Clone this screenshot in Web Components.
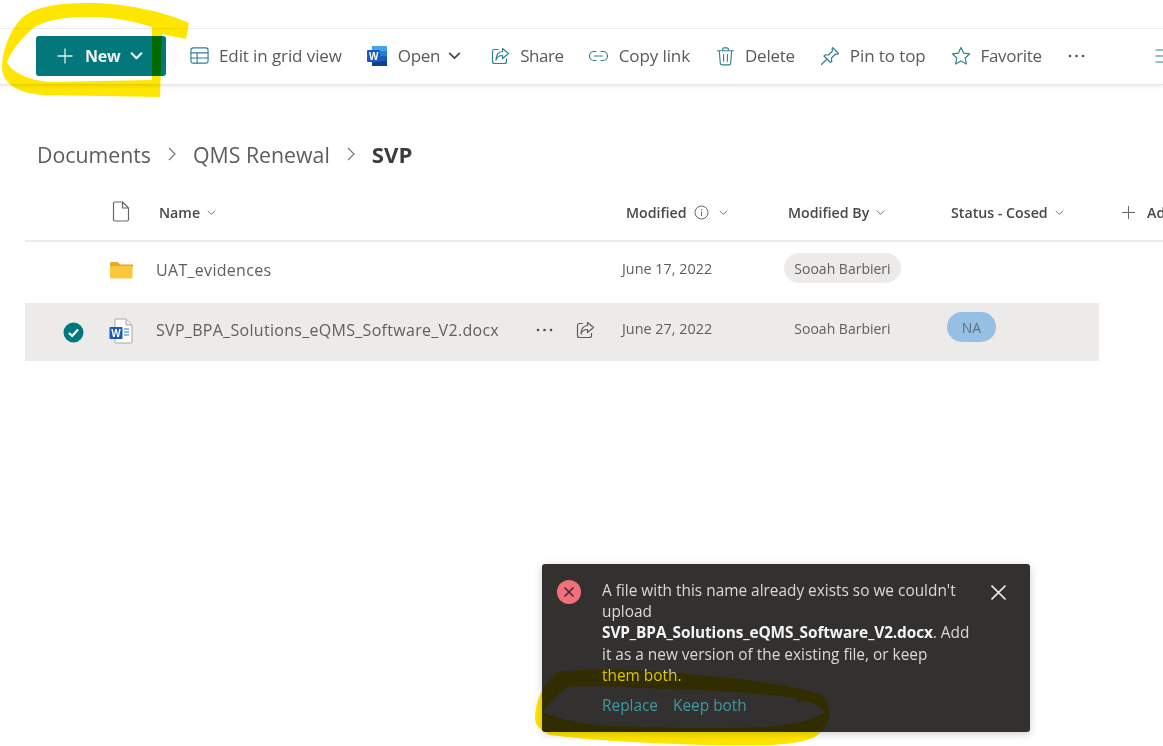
<!DOCTYPE html>
<html lang="en"><head><meta charset="utf-8"><title>SVP</title>
<style>
html,body{margin:0;height:100%;overflow:hidden;background:#fff}
body{font-family:"Open Sans","Liberation Sans",sans-serif;color:#605e5c;position:relative;width:1163px;height:746px;filter:blur(.45px)}
svg{display:block}
</style></head><body>
<sp-toolbar>
  <sp-new>New</sp-new>
  <sp-tool icon="grid">Edit in grid view</sp-tool>
  <sp-tool icon="word" caret style="letter-spacing:-.3px">Open</sp-tool>
  <sp-tool icon="share" style="margin-left:5px;letter-spacing:-.45px">Share</sp-tool>
  <sp-tool icon="link">Copy link</sp-tool>
  <sp-tool icon="trash" style="margin-left:2px;letter-spacing:-.25px">Delete</sp-tool>
  <sp-tool icon="pin" style="margin-left:1px">Pin to top</sp-tool>
  <sp-tool icon="star" style="margin-left:1px;letter-spacing:-.35px">Favorite</sp-tool>
  <sp-tool icon="more" style="margin-left:2px"></sp-tool>
  <sp-tool icon="list" style="margin-left:46px"></sp-tool>
</sp-toolbar>
<sp-crumbs><span>Documents</span><sp-sep></sp-sep><span>QMS Renewal</span><sp-sep></sp-sep><b>SVP</b></sp-crumbs>
<sp-list>
  <sp-head></sp-head>
  <sp-row kind="folder" name="UAT_evidences" date="June 17, 2022"><sp-pill>Sooah Barbieri</sp-pill></sp-row>
  <sp-row kind="doc" selected name="SVP_BPA_Solutions_eQMS_Software_V2.docx" date="June 27, 2022" status="NA"><sp-pill flat>Sooah Barbieri</sp-pill></sp-row>
</sp-list>
<sp-toast>A file with this name already exists so we couldn't upload <b>SVP_BPA_Solutions_eQMS_Software_V2.docx</b>. Add<br>it as a new version of the existing file, or keep<br>them both.</sp-toast>
<sp-marker></sp-marker>
<script>
const T='#2f8290';
const stroke=(inner,w=20,h=20,vb='0 0 20 20')=>`<svg width="${w}" height="${h}" viewBox="${vb}" fill="none" stroke="${T}" stroke-width="1.2" stroke-linecap="round" stroke-linejoin="round">${inner}</svg>`;
const ICONS={
 grid:stroke('<rect x="1" y="2" width="18" height="16" rx="2.200"/><path d="M1 7.300h18M1 12.600h18M7.500 7.300V18"/>',19,19),
 word:`<svg width="22" height="22" viewBox="0 0 22 22"><rect x="6" y="1" width="15" height="20" rx="1" fill="#2b7cd3"/><rect x="6" y="11" width="15" height="5" fill="#185abd"/><rect x="6" y="16" width="15" height="5" fill="#103f91"/><rect x="6" y="1" width="15" height="5" fill="#41a5ee"/><rect x="1" y="5" width="13" height="12" rx="1" fill="#185abd"/><text x="7.5" y="14.6" font-family="Liberation Sans" font-weight="700" font-size="10" fill="#fff" text-anchor="middle">W</text></svg>`,
 share:stroke('<path d="M8 3.500H4.500A2 2 0 0 0 2.500 5.500v10a2 2 0 0 0 2 2h10a2 2 0 0 0 2-2V13"/><path d="M12.500 2.500l6 5-6 5V9.500C9 9.500 7 11 6 14c0-5 2.500-8.500 6.500-8.500z"/>'),
 link:stroke('<path d="M8 5.500H6a4.500 4.500 0 0 0 0 9h2M13 5.500h2a4.500 4.500 0 0 1 0 9h-2M6.500 10h8"/>',21,20,'0 0 21 20'),
 trash:stroke('<path d="M1.500 4.500h17M7 4.500V3a1.500 1.500 0 0 1 1.500-1.500h3A1.500 1.500 0 0 1 13 3v1.500M3.500 4.500l1 13a2 2 0 0 0 2 1.800h7a2 2 0 0 0 2-1.800l1-13M8 8.500v7M12 8.500v7"/>',19,20),
 pin:stroke('<path d="M12.500 1.500l6 6-1 .9-2-.4-4 4 .2 3.300-1.200 1.200-6.500-6.500 1.200-1.200 3.300.2 4-4-.4-2zM6.500 13.500L1.500 18.500"/>'),
 star:stroke('<path d="M10 1.500l2.600 5.600 6.100.7-4.500 4.200 1.200 6L10 15l-5.400 3 1.200-6L1.300 7.800l6.100-.7z"/>'),
 more:`<svg width="17" height="20" viewBox="0 0 17 20" fill="#3d5a66"><circle cx="2" cy="10" r="1.300"/><circle cx="8.500" cy="10" r="1.300"/><circle cx="15" cy="10" r="1.300"/></svg>`,
 list:stroke('<path d="M1 4h18M1 10h18M1 16h18"/>'),
};
const chev=(s=12,c='#4a4846',w=1.6)=>`<svg width="${s}" height="${s}" viewBox="0 0 12 12" fill="none" stroke="${c}" stroke-width="${w}" stroke-linecap="round" stroke-linejoin="round"><path d="M1.500 4l4.500 4.500L10.500 4"/></svg>`;
class Base extends HTMLElement{
  html(){return ''}
  connectedCallback(){ if(!this.shadowRoot){this.attachShadow({mode:'open'}).innerHTML=this.html()} }
}
const def=(n,html)=>customElements.define(n,class extends Base{html(){return html(this)}});
def('sp-toolbar',()=>`<style>:host{display:flex;align-items:center;gap:24px;height:57px;margin-top:28px;padding:0 0 2px 36px;box-sizing:border-box;border-top:1px solid #ececec;border-bottom:1px solid #e6e6e6;box-shadow:0 2px 3px rgba(0,0,0,.07);overflow:hidden;background:#fff;font-size:17px}</style><slot></slot>`);
def('sp-new',()=>`<style>:host{display:flex;flex:none;align-items:center;box-sizing:border-box;width:130px;height:40px;padding-left:21px;background:#03787c;color:#f3f3f3;border-radius:3px;font-weight:700;font-size:16px;letter-spacing:-.2px}
svg{display:block}.p{margin-right:12px}.c{margin-left:9px}</style><svg class="p" width="16" height="16" viewBox="0 0 16 16" stroke="#e4eeee" stroke-width="1.300" fill="none"><path d="M8 .5v15M.5 8h15"/></svg><slot></slot><span class="c">${chev(13,'#f3f3f3',2)}</span>`);
def('sp-tool',h=>`<style>:host{display:flex;flex:none;align-items:center;gap:10px;color:#5c5a58;font-size:17px;letter-spacing:-.1px}svg{display:block}.k{margin-left:-2px}</style>${ICONS[h.getAttribute('icon')]}${h.textContent.trim()?'<slot></slot>':''}${h.hasAttribute('caret')?`<span class="k">${chev(13)}</span>`:''}`);
def('sp-crumbs',()=>`<style>:host{display:flex;align-items:center;gap:17px;height:42px;margin-top:48px;padding-left:37px;font-size:21.300px;color:#5f5d5b}
::slotted(b){color:#3e3c3a;font-weight:700;font-size:22.200px}</style><slot></slot>`);
def('sp-sep',()=>`<style>:host{display:block;flex:none}svg{display:block}</style><svg width="8" height="14" viewBox="0 0 8 14" fill="none" stroke="#7a7876" stroke-width="1.200"><path d="M1 1l6 6-6 6"/></svg>`);
def('sp-list',()=>`<style>:host{display:block;margin-top:10px;margin-left:25px}</style><slot></slot>`);
const COLS='grid-template-columns:84px 47px 465px 163px 163px 152px';
def('sp-head',()=>`<style>:host{display:grid;${COLS} 1fr;align-items:center;height:55px;margin-bottom:1px;border-bottom:2px solid #edebe9;font-size:14.200px;font-weight:600;color:#4b4947;white-space:nowrap;overflow:hidden}
.c{display:flex;align-items:center;gap:7px}svg{display:block;flex:none}</style>
<span></span>
<span class="c" style="margin:-2px 0 0 3px"><svg width="18" height="21" viewBox="0 0 18 21" fill="none" stroke="#6a6866" stroke-width="1.200" stroke-linejoin="round"><path d="M3 1h7.500L16.500 7v11.500a1.500 1.500 0 0 1-1.500 1.500H3a1.500 1.500 0 0 1-1.500-1.500v-16A1.500 1.500 0 0 1 3 1zM10.500 1v6h6"/></svg></span>
<span class="c" style="padding-left:3px">Name ${chev(9,'#6a6866',1.200)}</span>
<span class="c" style="padding-left:5px">Modified <svg width="15" height="15" viewBox="0 0 15 15" fill="none" stroke="#6a6866"><circle cx="7.500" cy="7.500" r="6.500"/><path d="M7.500 6.500v4.500M7.500 4v1.200"/></svg><span style="margin-left:3px;display:flex">${chev(9,'#6a6866',1.200)}</span></span>
<span class="c" style="padding-left:4px">Modified By ${chev(9,'#6a6866',1.200)}</span>
<span class="c" style="padding-left:4px">Status - Cosed ${chev(9,'#6a6866',1.200)}</span>
<span class="c" style="padding-left:23px;gap:12px"><svg width="13" height="13" viewBox="0 0 13 13" stroke="#6a6866" fill="none"><path d="M6.500 0v13M0 6.500h13"/></svg>Add column</span>`);
const FOLDER=`<svg width="24" height="18" viewBox="0 0 24 18"><path d="M1 2.500A1.500 1.500 0 0 1 2.500 1h6l3 2.500H24V6H1z" fill="#e9a820"/><path d="M1 5h22.500v11.500a1 1 0 0 1-1 1h-20.500a1 1 0 0 1-1-1z" fill="#fcc63d"/></svg>`;
const DOC=`<svg width="24" height="26" viewBox="0 0 24 26"><path d="M6 1h11l6 6v17.500a.5.500 0 0 1-.5.500H6.500a.5.500 0 0 1-.5-.5z" fill="#fff" stroke="#a9a7a5"/><path d="M17 1v6h6" fill="#eee" stroke="#a9a7a5"/><path d="M15 11h5M15 14h5M15 17h5" stroke="#6ea7dc" stroke-width="1.300"/><rect x="0.500" y="9" width="13" height="12" rx="1" fill="#185abd"/><text x="7" y="18.500" font-family="Liberation Sans" font-weight="700" font-size="10" fill="#fff" text-anchor="middle">W</text></svg>`;
def('sp-row',h=>{const sel=h.hasAttribute('selected'),st=h.getAttribute('status');return `<style>:host{display:grid;${COLS};align-items:center;height:58px;width:1074px;${sel?'background:#edebe9;':''}margin-top:${sel?'2':'0'}px;font-size:16px;color:#605e5c;white-space:nowrap}
svg{display:block}.ck{justify-self:end;margin-right:25px}.n{display:flex;align-items:center;justify-content:space-between;padding-right:26px;letter-spacing:.3px;margin-bottom:4px}
.a{display:flex;gap:22px;align-items:center}.d{font-size:14.400px;letter-spacing:0;margin-bottom:8px;padding-left:1px}
.st{justify-self:start;width:49px;height:30px;border-radius:15px;background:#95c0e3;color:#5c6e80;display:flex;align-items:center;justify-content:center;font-size:14px}.sc{margin-bottom:10px}</style>
<span class="ck">${sel?`<svg width="21" height="21" viewBox="0 0 21 21"><circle cx="10.500" cy="10.500" r="10" fill="#03787c"/><path d="M6 11l3.200 3L15 7.500" fill="none" stroke="#fff" stroke-width="2.200"/></svg>`:''}</span>
<span style="margin-bottom:${sel?2:4}px">${sel?DOC:FOLDER}</span>
<span class="n"><span>${h.getAttribute('name')}</span>${sel?`<span class="a"><svg width="17" height="20" viewBox="0 0 17 20" fill="#4d4b49"><circle cx="2" cy="10" r="1.300"/><circle cx="8.500" cy="10" r="1.300"/><circle cx="15" cy="10" r="1.300"/></svg><svg width="20" height="20" viewBox="0 0 20 20" fill="none" stroke="#5f5d5b" stroke-width="1.200" stroke-linejoin="round"><path d="M8 3.500H4.500a2 2 0 0 0-2 2v10a2 2 0 0 0 2 2h10a2 2 0 0 0 2-2V13"/><path d="M12.500 2.500l6 5-6 5V9.500C9 9.500 7 11 6 14c0-5 2.500-8.500 6.500-8.500z"/></svg></span>`:''}</span>
<span class="d">${h.getAttribute('date')}</span>
<slot></slot>
<span class="sc">${st?`<span class="st">${st}</span>`:''}</span>`});
def('sp-pill',h=>`<style>:host{display:flex;align-items:center;justify-content:center;justify-self:start;width:117px;height:30px;margin-bottom:8px;border-radius:15px;${h.hasAttribute('flat')?'':'background:#edebe9;'}font-size:14px;color:#605e5c;white-space:nowrap}</style><slot></slot>`);
def('sp-toast',()=>`<style>:host{position:absolute;left:542px;top:564px;width:488px;height:168px;box-sizing:border-box;padding:16px 15px 0;background:#323130;border-radius:3px;box-shadow:0 2px 8px rgba(0,0,0,.2);color:#dcdad8;font-size:15.400px;line-height:21.200px;display:grid;grid-template-columns:24px 375px 1fr;column-gap:21px}
svg{display:block}.m ::slotted(b){color:#f4f4f4;font-weight:700;letter-spacing:-.1px}.acts{display:flex;gap:15px;margin-top:9px;color:#3f9aa0}.x{margin:5px 0 0 -7px}</style>
<svg width="24" height="24" viewBox="0 0 24 24"><circle cx="12" cy="12" r="12" fill="#f1707b"/><path d="M7.500 7.500l9 9M16.500 7.500l-9 9" stroke="#3a2a2c" stroke-width="1.500"/></svg>
<div class="m"><slot></slot><div class="acts"><span>Replace</span><span>Keep both</span></div></div>
<svg class="x" width="15" height="15" viewBox="0 0 15 15" stroke="#e6e6e6" stroke-width="1.600" fill="none"><path d="M.5.500l14 14M14.500.500l-14 14"/></svg>`);
def('sp-marker',()=>`<style>:host{position:absolute;inset:0;display:block;pointer-events:none;mix-blend-mode:multiply}svg{display:block}</style>
<svg width="1163" height="746" viewBox="0 0 1163 746" fill="#ffe600" fill-rule="evenodd">
<path d="M189 23C165 12 125 3 90 3C60 3 35 6 22 18C10 30 2 50 2 68C3 85 20 94 45 95L160 97L162 34L186 39ZM152 27C130 20 110 17 90 17C65 17 45 20 33 28C22 38 10 52 7 62C10 70 25 80 50 82L152 80Z"/>
<path d="M557 672C580 669 610 669 630 670C670 672 700 675 730 678C770 682 800 688 823 695C829 705 830 712 829 718C826 728 820 734 813 738C795 744 780 745 763 745C720 746 670 744 630 742C600 740 570 738 550 735C540 730 535 725 535 718C535 710 537 702 540 695C545 685 550 678 557 672ZM567 687C558 695 548 704 543 712C555 718 575 722 597 725C650 728 710 729 763 727C790 725 815 720 825 712C820 705 810 700 797 702L797 698C750 692 700 690 640 688C610 686 585 686 567 687Z"/>
</svg>`);
</script>
</body></html>
